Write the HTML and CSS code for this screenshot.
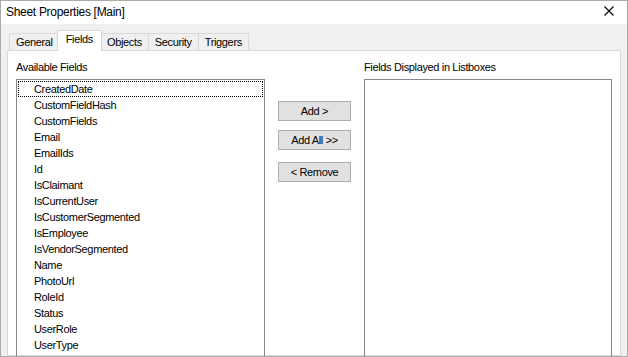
FILE: index.html
```html
<!DOCTYPE html>
<html lang="en">
<head>
    <meta charset="UTF-8">
    <title>Sheet Properties [Main]</title>
    <link rel="stylesheet" href="styles.css">
</head>
<body>
    <div class="window">
        <div class="titlebar">
            <span class="title">Sheet Properties [Main]</span>
            <svg class="close" width="10" height="10" viewBox="0 0 10 10">
                <path d="M0.5 0.5 L9.5 9.5 M9.5 0.5 L0.5 9.5" stroke="#000" stroke-width="1.1" fill="none"/>
            </svg>
        </div>
        <div class="dialog">
            <div class="tabs">
                <div class="tab">General</div>
                <div class="tab active">Fields</div>
                <div class="tab">Objects</div>
                <div class="tab">Security</div>
                <div class="tab">Triggers</div>
            </div>
            <div class="panel">
                <div class="column left">
                    <div class="label">Available Fields</div>
                    <div class="listbox">
                        <div class="item focused">CreatedDate</div>
                        <div class="item">CustomFieldHash</div>
                        <div class="item">CustomFields</div>
                        <div class="item">Email</div>
                        <div class="item">EmailIds</div>
                        <div class="item">Id</div>
                        <div class="item">IsClaimant</div>
                        <div class="item">IsCurrentUser</div>
                        <div class="item">IsCustomerSegmented</div>
                        <div class="item">IsEmployee</div>
                        <div class="item">IsVendorSegmented</div>
                        <div class="item">Name</div>
                        <div class="item">PhotoUrl</div>
                        <div class="item">RoleId</div>
                        <div class="item">Status</div>
                        <div class="item">UserRole</div>
                        <div class="item">UserType</div>
                    </div>
                </div>
                <div class="buttons">
                    <button class="btn">Add &gt;</button>
                    <button class="btn">Add All &gt;&gt;</button>
                    <button class="btn remove">&lt; Remove</button>
                </div>
                <div class="column right">
                    <div class="label">Fields Displayed in Listboxes</div>
                    <div class="listbox"></div>
                </div>
            </div>
        </div>
    </div>
</body>
</html>
```

FILE: styles.css
```css
/* Windows dialog look */
body {
    margin: 0;
    padding: 0;
    background-color: #ffffff;
    font-family: "Liberation Sans", Arial, sans-serif;
    font-size: 11px;
    letter-spacing: -0.35px;
    color: #000;
}
.window {
    width: 628px;
    height: 357px;
    box-sizing: border-box;
    border: 1px solid #aaaaaa;
    background-color: #f0f0f0;
    overflow: hidden;
    display: flex;
    flex-direction: column;
}
.titlebar {
    height: 23px;
    flex-shrink: 0;
    background-color: #ffffff;
    display: flex;
    align-items: center;
    justify-content: space-between;
    padding: 0 13px 0 5px;
}
.title {
    font-size: 12px;
    letter-spacing: -0.3px;
    margin-top: -2px;
}
.close {
    margin-top: -3px;
}
.dialog {
    flex: 1;
    padding: 7px 6px 0 6px;
    display: flex;
    flex-direction: column;
    min-height: 0;
}
.tabs {
    display: flex;
    align-items: flex-end;
    height: 19px;
    padding-left: 2px;
    position: relative;
    z-index: 1;
}
.tab {
    height: 17px;
    line-height: 16px;
    box-sizing: border-box;
    padding: 0 6px;
    border: 1px solid #d9d9d9;
    border-bottom: none;
    margin-left: -1px;
    background-color: #f0f0f0;
}
.tab:first-child {
    margin-left: 0;
}
.tab.active {
    height: 21px;
    line-height: 17px;
    margin: 0 -2px -1px -3px;
    padding: 0 8px;
    background-color: #ffffff;
    position: relative;
    z-index: 2;
}
.tab.active + .tab {
    margin-left: 0;
}
.panel {
    flex: 1;
    background-color: #ffffff;
    border: 1px solid #d9d9d9;
    display: flex;
    padding: 9px 7px 0 8px;
    gap: 13px;
    min-height: 0;
}
.column {
    display: flex;
    flex-direction: column;
}
.column.left {
    width: 249px;
}
.column.right {
    width: 248px;
}
.label {
    line-height: 14px;
    margin-bottom: 5px;
}
.listbox {
    height: 400px;
    border: 1px solid #828790;
    padding: 1px;
    flex-shrink: 0;
}
.item {
    height: 16px;
    line-height: 16px;
    padding-left: 16px;
    white-space: nowrap;
}
.item.focused {
    outline: 1px dotted #000;
    outline-offset: -1px;
}
.buttons {
    width: 73px;
    display: flex;
    flex-direction: column;
    padding-top: 41px;
    gap: 9px;
}
.btn {
    height: 20px;
    width: 73px;
    padding: 0;
    font-family: "Liberation Sans", Arial, sans-serif;
    font-size: 11px;
    letter-spacing: -0.35px;
    color: #000;
    background-color: #e1e1e1;
    border: 1px solid #adadad;
    border-radius: 0;
}
.btn.remove {
    margin-top: 3px;
}
```
